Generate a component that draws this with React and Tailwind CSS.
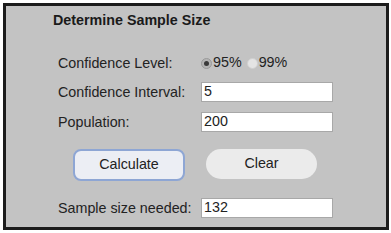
import React, { useState } from "react";

export default function App() {
    const [level, setLevel] = useState("95");
    const [interval, setInterval] = useState("5");
    const [population, setPopulation] = useState("200");
    const [result, setResult] = useState("132");

    const Radio = ({ value, label }) => (
        <label
            className="flex items-center cursor-pointer"
            onClick={() => setLevel(value)}
        >
            {level === value ? (
                <span className="w-[11px] h-[11px] rounded-full bg-[#b4b4b4] border border-[#9a9a9a] flex items-center justify-center">
                    <span className="w-[5px] h-[5px] rounded-full bg-[#3a3a3a]" />
                </span>
            ) : (
                <span className="w-[11px] h-[11px] rounded-full bg-[#e4e4e4] border border-[#d0d0d0]" />
            )}
            <span className="ml-[1px]">{label}</span>
        </label>
    );

    return (
        <div className="bg-white w-[391px] h-[233px] p-[3px] font-['Liberation_Sans',Arial,sans-serif] text-[14.3px] text-[#222]">
            <div className="w-[386px] h-[227px] border-[3px] border-[#1c1c1c] bg-[#c3c3c3] pt-[6px]">
                <div className="pl-[47px] h-[16px] leading-[16px] font-bold text-[#1a1a1a]">
                    Determine Sample Size
                </div>

                <div className="grid grid-cols-[143px_1fr] pl-[52px] mt-[25px] items-center">
                    <div className="h-[20px] leading-[20px]">Confidence Level:</div>
                    <div className="flex items-center h-[20px] gap-[5px]">
                        <Radio value="95" label="95%" />
                        <Radio value="99" label="99%" />
                    </div>

                    <div className="h-[20px] leading-[20px] mt-[9px]">Confidence Interval:</div>
                    <input
                        className="mt-[9px] w-[132px] h-[20px] bg-white border border-[#a8a8a8] px-[2px] outline-none"
                        value={interval}
                        onChange={(e) => setInterval(e.target.value)}
                    />

                    <div className="h-[20px] leading-[20px] mt-[10px]">Population:</div>
                    <input
                        className="mt-[10px] w-[132px] h-[20px] bg-white border border-[#a8a8a8] px-[2px] outline-none"
                        value={population}
                        onChange={(e) => setPopulation(e.target.value)}
                    />
                </div>

                <div className="flex pl-[67px] mt-[17px] gap-[21px] items-start">
                    <button
                        type="button"
                        className="w-[112px] h-[32px] rounded-[8px] border-2 border-[#8ea6d4] bg-[#eceef4] text-[#222]"
                    >
                        Calculate
                    </button>
                    <button
                        type="button"
                        className="w-[111px] h-[30px] rounded-full bg-[#ebebeb] text-[#222]"
                        onClick={() => {
                            setInterval("");
                            setPopulation("");
                            setResult("");
                        }}
                    >
                        Clear
                    </button>
                </div>

                <div className="grid grid-cols-[143px_1fr] pl-[52px] mt-[17px] items-center">
                    <div className="h-[20px] leading-[20px]">Sample size needed:</div>
                    <input
                        className="w-[132px] h-[20px] bg-white border border-[#a8a8a8] px-[2px] outline-none"
                        value={result}
                        readOnly
                    />
                </div>
            </div>
        </div>
    );
}
